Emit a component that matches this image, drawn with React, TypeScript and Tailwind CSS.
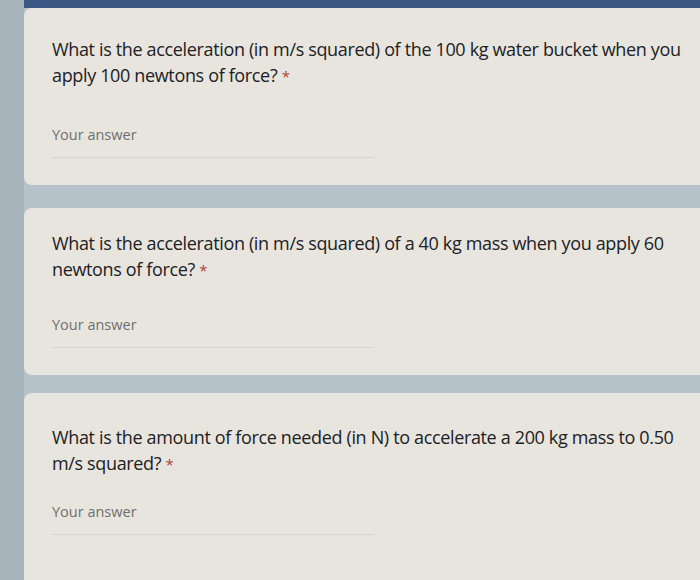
import React from "react";

const questions = [
  {
    first: "What is the acceleration (in m/s squared) of the 100 kg water bucket when you",
    second: "apply 100 newtons of force?",
    box: "h-[177px] pt-[28px]",
    gap: "mt-[36px]",
  },
  {
    first: "What is the acceleration (in m/s squared) of a 40 kg mass when you apply 60",
    second: "newtons of force?",
    box: "h-[167px] pt-[22px] mt-[23px]",
    gap: "mt-[32px]",
  },
  {
    first: "What is the amount of force needed (in N) to accelerate a 200 kg mass to 0.50",
    second: "m/s squared?",
    box: "h-[200px] pt-[31px] mt-[18px]",
    gap: "mt-[25px]",
  },
];

function Question({ first, second, box, gap }: { first: string; second: string; box: string; gap: string }) {
  return (
    <div className={`${box} shrink-0 bg-[#e8e5de] rounded-l-lg pl-[28px] pr-[4px]`}>
      <p className="text-[18px] leading-[26px] text-[#202124] whitespace-nowrap tracking-[-0.35px]">
        {first}
        <br />
        {second} <span className="text-[#b0413e] text-[15px]">*</span>
      </p>
      <div className={`${gap} w-[322px]`}>
        <div className="text-[14.5px] text-[#6f6f6f] leading-[20px] pb-[12px] border-b border-[#d6d3cc]">
          Your answer
        </div>
      </div>
    </div>
  );
}

export default function App() {
  return (
    <div
      className="w-[700px] h-[580px] overflow-hidden flex bg-[#b7c3ca]"
      style={{ fontFamily: "'Open Sans', Roboto, sans-serif" }}
    >
      <div className="w-[24px] h-full bg-[#a7b4bb] shrink-0" />
      <div className="flex-1 flex flex-col">
        <div className="h-[8px] shrink-0 bg-[#3b5784]" />
        {questions.map((q, i) => (
          <Question key={i} first={q.first} second={q.second} box={q.box} gap={q.gap} />
        ))}
      </div>
    </div>
  );
}
